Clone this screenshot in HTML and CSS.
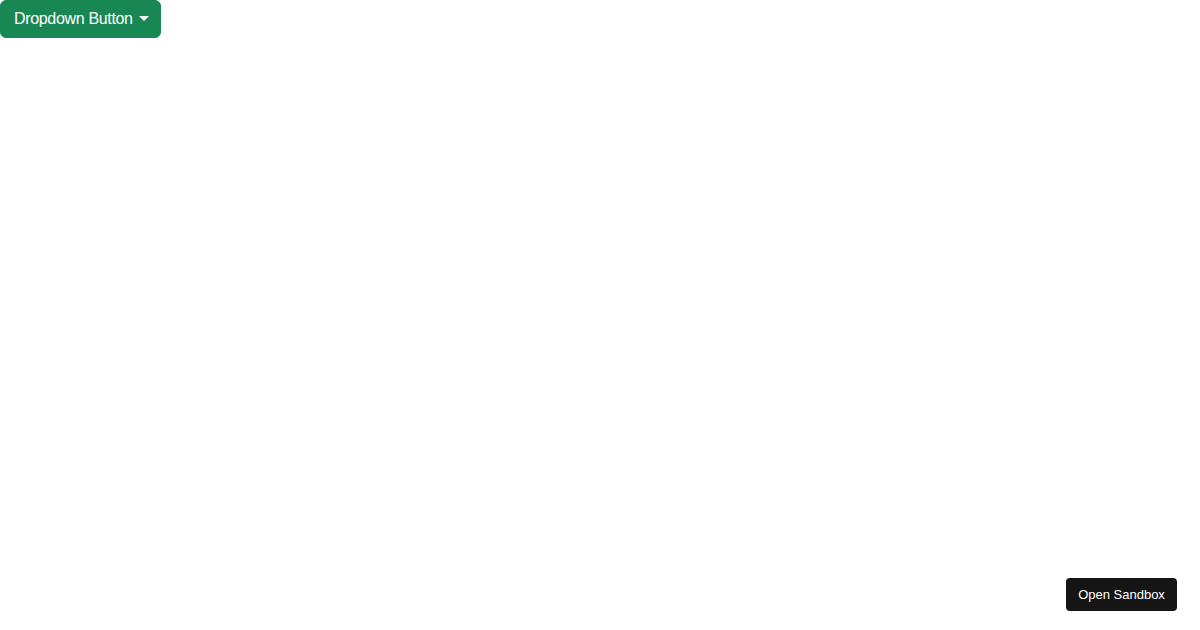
FILE: index.html
```html
<!DOCTYPE html>
<html lang="en">
<head>
<meta charset="utf-8">
<title>Dropdown</title>
<link rel="stylesheet" href="styles.css">
</head>
<body>
<div class="dropdown">
  <button class="btn-dropdown" type="button"><span class="label">Dropdown Button</span><span class="caret"></span></button>
</div>
<a class="sandbox" href="#">Open Sandbox</a>
</body>
</html>
```
FILE: styles.css
```css
html, body {
  margin: 0;
  padding: 0;
  background: #fff;
  font-family: "Liberation Sans", Arial, sans-serif;
}
.dropdown {
  display: flex;
}
.btn-dropdown {
  display: inline-flex;
  align-items: center;
  height: 38px;
  padding: 0 11px 0 13px;
  box-sizing: border-box;
  white-space: nowrap;
  font-family: "Liberation Sans", Arial, sans-serif;
  font-size: 16px;
  line-height: 24px;
  color: #fff;
  background: #198754;
  border: 1px solid #198754;
  border-radius: 6px;
  cursor: pointer;
}
.label {
  letter-spacing: -0.33px;
  white-space: nowrap;
}
.caret {
  display: inline-block;
  flex: none;
  margin-left: 6px;
  width: 0;
  height: 0;
  border-top: 5px solid #fff;
  border-left: 5px solid transparent;
  border-right: 5px solid transparent;
  margin-top: -2px;
}
.sandbox {
  position: fixed;
  right: 23px;
  bottom: 19px;
  width: 111px;
  height: 33px;
  display: flex;
  align-items: center;
  justify-content: center;
  box-sizing: border-box;
  background: #151515;
  color: #fff;
  font-size: 13px;
  text-decoration: none;
  border-radius: 4px;
}
```
